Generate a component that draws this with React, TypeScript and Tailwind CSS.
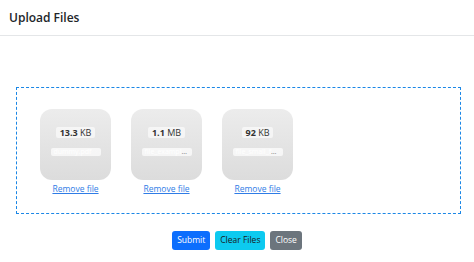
import React from "react";

type UploadedFile = {
  size: string;
  unit: string;
  name: string;
};

const files: UploadedFile[] = [
  { size: "13.3", unit: "KB", name: "dummy.pdf" },
  { size: "1.1", unit: "MB", name: "file_example_PDF_1MB.pdf" },
  { size: "92", unit: "KB", name: "file_small_format.pdf" },
];

function FilePreview({ file }: { file: UploadedFile }) {
  return (
    <div className="flex w-[71px] flex-col items-center">
      <div className="flex h-[71px] w-[71px] flex-col items-center rounded-[12px] bg-gradient-to-b from-[#ececec] to-[#dcdcdc] pt-[18px]">
        <div className="rounded-[2px] bg-white/60 px-[4px] text-[9px] leading-[11px] text-[#333]">
          <strong className="font-bold">{file.size}</strong> {file.unit}
        </div>
        <div className="mt-[10px] w-[50px] truncate rounded-[2px] bg-white/70 px-[3px] text-[7px] leading-[8px] text-[#777]">
          <span className="text-white/90">{file.name}</span>
        </div>
      </div>
      <a
        href="#"
        className="mt-[3px] text-[8.5px] leading-[11px] text-[#2f7ce6] underline"
      >
        Remove file
      </a>
    </div>
  );
}

export default function App() {
  return (
    <div
      className="h-[262px] w-[474px] overflow-hidden bg-white text-[#212529]"
      style={{ fontFamily: '"Open Sans", "Noto Sans", sans-serif' }}
    >
      <header className="flex h-[36px] items-center border-b border-[#e4e6e8] px-[9px]">
        <h5 className="text-[12px] font-semibold leading-none">Upload Files</h5>
      </header>

      <div className="px-[16px] pt-[51px]">
        <div className="flex h-[127px] w-[445px] gap-[20px] border-[1.5px] border-dashed border-[#1b87e6] pl-[23px] pt-[21px]">
          {files.map((file) => (
            <FilePreview key={file.name} file={file} />
          ))}
        </div>
      </div>

      <div className="mt-[17px] flex justify-center gap-[5px]">
        <button className="h-[19px] rounded-[3px] bg-[#0d6efd] px-[5px] text-[8.5px] text-white">
          Submit
        </button>
        <button className="h-[19px] rounded-[3px] bg-[#0dcaf0] px-[5px] text-[8.5px] text-[#1a1a1a]">
          Clear Files
        </button>
        <button className="h-[19px] rounded-[3px] bg-[#6c757d] px-[5px] text-[8.5px] text-white">
          Close
        </button>
      </div>
    </div>
  );
}
